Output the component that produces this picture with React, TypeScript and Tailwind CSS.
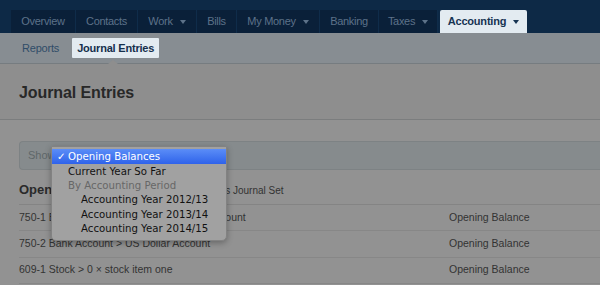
import React from 'react';

const TABS = [
  { label: 'Overview', w: 'w-[65px]' },
  { label: 'Contacts', w: 'w-[62px]' },
  { label: 'Work', w: 'w-[59px]', caret: true },
  { label: 'Bills', w: 'w-[40px]' },
  { label: 'My Money', w: 'w-[83px]', caret: true },
  { label: 'Banking', w: 'w-[59px]' },
  { label: 'Taxes', w: 'w-[59px]', caret: true },
];

const ROWS = [
  '750-1 Bank Account > Business Current Account',
  '750-2 Bank Account > US Dollar Account',
  '609-1 Stock > 0 × stock item one',
];

const Caret = ({ className }: { className: string }) => (
  <span className={`ml-[7px] inline-block w-0 h-0 border-l-[3.5px] border-r-[3.5px] border-t-[4px] border-l-transparent border-r-transparent ${className}`} />
);

export default function App() {
  return (
    <div className="relative w-[600px] h-[285px] overflow-hidden bg-[#929292] font-['Liberation_Sans',Arial,sans-serif]">
      {/* top nav */}
      <div className="h-[33px] bg-[#0d2946] flex items-end pl-[11px]">
        {TABS.map(t => (
          <div
            key={t.label}
            className={`${t.w} h-[23px] flex items-center justify-center bg-[#0a2039] border-r border-[#0f2c4a] text-[11px] tracking-[-0.3px] text-[#5d7289]`}
          >
            {t.label}
            {t.caret && <Caret className="border-t-[#5d7289]" />}
          </div>
        ))}
        <div className="ml-[2px] w-[87px] h-[23px] flex items-center justify-center bg-[#e3ebf1] rounded-t-[2px] text-[11px] font-bold tracking-[-0.2px] text-[#173453]">
          Accounting
          <Caret className="border-t-[#173453]" />
        </div>
      </div>

      {/* sub nav */}
      <div className="relative h-[31px] bg-[#878d92] border-b border-[#767c80] flex items-center pl-[22px]">
        <span className="text-[11px] tracking-[-0.2px] text-[#2f4c68]">Reports</span>
        <span className="ml-[13px] h-[20px] px-[5px] flex items-center bg-[#e3ebf1] rounded-[1px] text-[11px] font-bold tracking-[-0.2px] text-[#15304c]">
          Journal Entries
        </span>
        <span className="absolute left-[108px] bottom-[-1px] w-0 h-0 border-l-[5px] border-r-[5px] border-b-[4px] border-l-transparent border-r-transparent border-b-[#8e8e8e]" />
      </div>

      {/* page header */}
      <div className="h-[56px] pt-[3px] bg-[#8e8e8e] border-b border-[#7b7d7e] flex items-center pl-[19px]">
        <h1 className="text-[16px] font-bold tracking-[-0.1px] text-[#282828]">Journal Entries</h1>
      </div>

      {/* body */}
      <div className="pl-[19px] pt-[21px]">
        <div className="h-[29px] bg-[#868b8d] border border-[#7d8284] border-r-0 rounded-l-[4px] flex items-center pl-[8px]">
          <span className="text-[11px] text-[#5f6769]">Show</span>
        </div>

        <div className="mt-[6px] h-[29px] flex items-center border-b border-[#848484]">
          <span className="text-[13px] font-bold text-[#2a2a2a]">Opening Balances</span>
          <span className="ml-[16px] text-[10px] text-[#333]">Opening Balances Journal Set</span>
        </div>

        {ROWS.map(r => (
          <div key={r} className="h-[26.3px] flex items-center border-b border-[#878787] text-[10.5px] text-[#333]">
            <span className="w-[430px]">{r}</span>
            <span>Opening Balance</span>
          </div>
        ))}
      </div>

      {/* open select menu */}
      <div className="absolute left-[51px] top-[146px] w-[176px] pt-[2px] pb-[4px] bg-[#a1a1a1] border border-[#828282] rounded-b-[5px] shadow-[0_2px_6px_rgba(0,0,0,0.3)] font-['DejaVu_Sans',sans-serif] text-[10.2px] text-[#111]">
        <div className="h-[15px] flex items-center pl-[5px] bg-gradient-to-b from-[#5b8df7] to-[#2f62ea] text-white">
          <span className="w-[11px]">✓</span>
          <span>Opening Balances</span>
        </div>
        <div className="h-[14.4px] flex items-center pl-[16px]">Current Year So Far</div>
        <div className="h-[14.4px] flex items-center pl-[16px] text-[#676767]">By Accounting Period</div>
        <div className="h-[14.4px] flex items-center pl-[29px]">Accounting Year 2012/13</div>
        <div className="h-[14.4px] flex items-center pl-[29px]">Accounting Year 2013/14</div>
        <div className="h-[14.4px] flex items-center pl-[29px]">Accounting Year 2014/15</div>
      </div>
    </div>
  );
}
